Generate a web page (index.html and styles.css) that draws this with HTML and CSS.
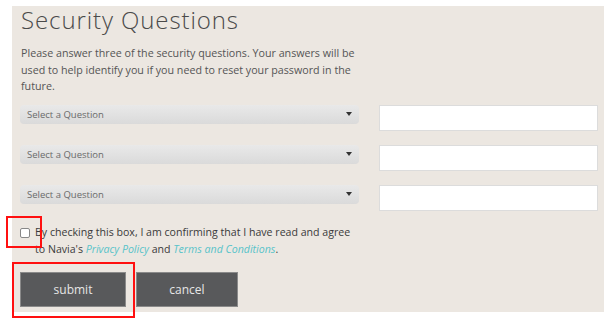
FILE: index.html
```html
<!DOCTYPE html>
<html>
<head>
<meta charset="utf-8">
<link rel="stylesheet" href="styles.css">
</head>
<body>
<div class="panel">
  <h1 class="title">Security Questions</h1>
  <p class="intro">Please answer three of the security questions. Your answers will be used to help identify you if you need to reset your password in the future.</p>
  <div class="qrows">
    <div class="qrow">
      <div class="select"><span>Select a Question</span><span class="caret"></span></div>
      <div class="answer"></div>
    </div>
    <div class="qrow">
      <div class="select"><span>Select a Question</span><span class="caret"></span></div>
      <div class="answer"></div>
    </div>
    <div class="qrow">
      <div class="select"><span>Select a Question</span><span class="caret"></span></div>
      <div class="answer"></div>
    </div>
  </div>
  <div class="agree">
    <span class="check"></span>
    <p class="agree-text">By checking this box, I am confirming that I have read and agree to Navia's <a class="link">Privacy Policy</a> and <a class="link">Terms and Conditions</a>.</p>
  </div>
  <div class="buttons">
    <div class="btn">submit</div>
    <div class="btn">cancel</div>
  </div>
</div>
<div class="mark mark-check"></div>
<div class="mark mark-submit"></div>
</body>
</html>
```
FILE: styles.css
```css
html, body {
  margin: 0;
  padding: 0;
  background: #ffffff;
  width: 611px;
  height: 326px;
  overflow: hidden;
  position: relative;
}
.panel {
  margin: 6px 0 0 12px;
  width: 592px;
  height: 306px;
  background: #ece7e1;
  box-sizing: border-box;
  padding: 0 0 0 8px;
  font-family: "Open Sans", "Liberation Sans", sans-serif;
  color: #555;
}
.title {
  margin: 0;
  padding: 0 0 0 1px;
  font-family: "Open Sans", sans-serif;
  font-weight: 300;
  font-size: 24px;
  line-height: 28px;
  color: #4a4a4a;
  letter-spacing: 0.9px;
}
.intro {
  margin: 11px 0 0 1px;
  width: 340px;
  font-size: 10.7px;
  line-height: 16.5px;
  color: #555;
}
.qrows {
  margin-top: 10px;
  display: flex;
  flex-direction: column;
  gap: 14px;
}
.qrow {
  display: flex;
  gap: 20px;
  height: 26px;
}
.select {
  width: 339px;
  height: 19px;
  border-radius: 4px;
  background: linear-gradient(#e9e9e9, #dadada);
  display: flex;
  align-items: center;
  justify-content: space-between;
  padding: 0 7px 0 7px;
  box-sizing: border-box;
  font-size: 9.5px;
  color: #6a6a6a;
}
.caret {
  width: 0;
  height: 0;
  border-left: 3px solid transparent;
  border-right: 3px solid transparent;
  border-top: 4px solid #333;
}
.answer {
  width: 219px;
  height: 26px;
  background: #fff;
  border: 1px solid #dcdcdc;
  box-sizing: border-box;
}
.agree {
  margin-top: 13px;
  display: flex;
  gap: 5px;
}
.check {
  flex: none;
  width: 8px;
  height: 8px;
  margin-top: 4px;
  border: 1px solid #888;
  border-radius: 2px;
  background: #fff;
}
.agree-text {
  margin: 0;
  width: 322px;
  font-size: 10.6px;
  line-height: 17px;
  color: #3a3a3a;
}
.link {
  color: #58c3c9;
  font-style: italic;
}
.buttons {
  margin-top: 14px;
  display: flex;
  gap: 10px;
}
.btn {
  width: 106px;
  height: 35px;
  background: #58595b;
  border: 1px solid #8a8a8a;
  box-sizing: border-box;
  display: flex;
  align-items: center;
  justify-content: center;
  color: #e6e6e6;
  font-size: 12px;
  font-family: "Open Sans", sans-serif;
}
.btn + .btn {
  width: 102px;
}
.mark {
  position: absolute;
  border: 2px solid #ff1010;
  box-sizing: border-box;
}
.mark-check {
  left: 6px;
  top: 216px;
  width: 36px;
  height: 32px;
}
.mark-submit {
  left: 12px;
  top: 262px;
  width: 123px;
  height: 56px;
}
```
